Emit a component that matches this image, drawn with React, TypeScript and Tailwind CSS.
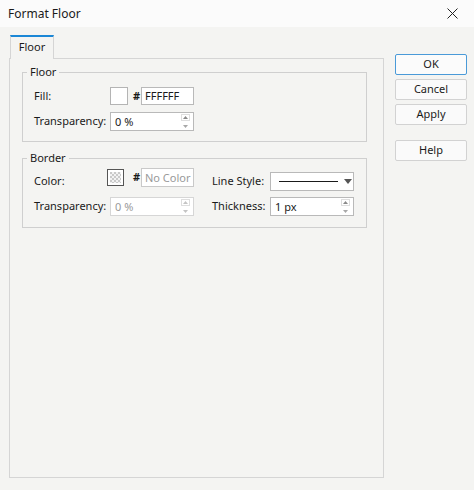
import React from "react";

const Spin = ({ value, disabled }: { value: string; disabled?: boolean }) => (
  <div className={`flex h-[19px] w-[84px] shrink-0 border ${disabled ? "border-[#d6d6d6]" : "border-[#b9b9b9]"} bg-white`}>
    <div className={`flex-1 whitespace-nowrap pl-[4px] leading-[17px] ${disabled ? "text-[#9a9a9a]" : "text-[#1a1a1a]"}`}>{value}</div>
    <div className="flex w-[13px] flex-col items-center justify-center gap-[2px] pr-[2px]">
      <div className="flex h-[7px] w-[9px] items-center justify-center border border-[#dedede]">
        <svg width="5" height="3" viewBox="0 0 5 3"><path d="M0 3 L2.5 0 L5 3Z" fill={disabled ? "#c4c4c4" : "#8a8a8a"} /></svg>
      </div>
      <div className="flex h-[6px] w-[9px] items-center justify-center">
        <svg width="5" height="3" viewBox="0 0 5 3"><path d="M0 0 L2.5 3 L5 0Z" fill={disabled ? "#c4c4c4" : "#a8a8a8"} /></svg>
      </div>
    </div>
  </div>
);

const Btn = ({ label, primary, className = "" }: { label: string; primary?: boolean; className?: string }) => (
  <div
    className={`flex h-[21px] w-[72px] items-center justify-center rounded-[2px] border text-[#1a1a1a] ${
      primary ? "border-[#4a9ad8] bg-[#fbfbfb]" : "border-[#d2d2d2] bg-[#fafafa]"
    } ${className}`}
  >
    {label}
  </div>
);

export default function App() {
  return (
    <div
      className="relative h-[490px] w-[474px] overflow-hidden whitespace-nowrap bg-[#f4f4f2] text-[11px] text-[#1a1a1a]"
      style={{ fontFamily: '"Noto Sans", "Liberation Sans", sans-serif' }}
    >
      {/* title bar */}
      <div className="flex h-[27px] items-center justify-between bg-[#fbfbfb] pl-[8px] pr-[16px]">
        <span className="text-[12px]">Format Floor</span>
        <svg width="11" height="11" viewBox="0 0 11 11">
          <path d="M0.5 0.5 L10.5 10.5 M10.5 0.5 L0.5 10.5" stroke="#222" strokeWidth="1" />
        </svg>
      </div>

      <div className="flex pl-[9px] pt-[8px]">
        {/* tabs */}
        <div className="flex w-[375px] flex-col">
          <div className="relative z-10 mb-[-1px] ml-[1px] flex h-[24px] w-[44px] items-center justify-center border-x border-t-2 border-x-[#d5d5d5] border-t-[#1b87d6] bg-[#f4f4f2] pb-[1px]">
            Floor
          </div>
          <div className="h-[420px] border border-[#d5d5d5] bg-[#f4f4f2] pl-[12px] pr-[16px] pt-[5px]">
            {/* Floor group */}
            <fieldset className="border border-[#cfcfcf] pb-[10px] pl-[11px]">
              <legend className="-ml-[7px] px-[3px] leading-[16px]">Floor</legend>
              <div className="mt-[7px] flex h-[18px] items-center">
                <div className="w-[76px] shrink-0">Fill:</div>
                <div className="h-[18px] w-[18px] shrink-0 border border-[#b4b4b4] bg-white" />
                <div className="ml-[5px] w-[8px] shrink-0 text-[11px] font-bold">#</div>
                <div className="h-[18px] w-[53px] shrink-0 border border-[#b9b9b9] bg-white pl-[3px] leading-[16px]">FFFFFF</div>
              </div>
              <div className="mt-[7px] flex h-[19px] items-center">
                <div className="w-[76px] shrink-0">Transparency:</div>
                <Spin value="0 %" />
              </div>
            </fieldset>

            {/* Border group */}
            <fieldset className="mt-[8px] border border-[#cfcfcf] pb-[11px] pl-[11px]">
              <legend className="-ml-[7px] px-[3px] leading-[16px]">Border</legend>
              <div className="mt-[6px] flex h-[19px] items-center">
                <div className="w-[73px] shrink-0">Color:</div>
                <div className="-mt-[8px] flex shrink-0 items-center">
                  <div className="h-[17px] w-[17px] border border-[#555] bg-white p-[2px]">
                    <svg width="11" height="11" viewBox="0 0 11 11">
                      <defs>
                        <pattern id="ck" width="4" height="4" patternUnits="userSpaceOnUse">
                          <rect width="4" height="4" fill="#f2f2f2" />
                          <rect width="2" height="2" fill="#c9c9c9" />
                          <rect x="2" y="2" width="2" height="2" fill="#c9c9c9" />
                        </pattern>
                      </defs>
                      <rect width="11" height="11" fill="url(#ck)" />
                    </svg>
                  </div>
                  <div className="ml-[9px] w-[8px] text-[11px] font-bold">#</div>
                  <div className="h-[19px] w-[53px] border border-[#c9c9c9] bg-white pl-[3px] leading-[17px] text-[#9a9a9a]">No Color</div>
                </div>
                <div className="ml-[18px] w-[58px] shrink-0">Line Style:</div>
                <div className="flex h-[19px] w-[84px] shrink-0 items-center border border-[#b9b9b9] bg-white">
                  <div className="ml-[8px] h-[1px] w-[60px] bg-[#1a1a1a]" />
                  <div className="ml-[5px] flex h-[15px] w-[10px] items-center justify-center">
                    <svg width="8" height="5" viewBox="0 0 8 5"><path d="M0 0 L8 0 L4 5Z" fill="#555" /></svg>
                  </div>
                </div>
              </div>
              <div className="mt-[6px] flex h-[19px] items-center">
                <div className="w-[76px] shrink-0">Transparency:</div>
                <Spin value="0 %" disabled />
                <div className="ml-[18px] w-[58px] shrink-0">Thickness:</div>
                <Spin value="1 px" />
              </div>
            </fieldset>
          </div>
        </div>

        {/* buttons */}
        <div className="ml-[11px] flex flex-col pt-[19px]">
          <Btn label="OK" primary />
          <Btn label="Cancel" className="mt-[4px]" />
          <Btn label="Apply" className="mt-[4px]" />
          <Btn label="Help" className="mt-[15px]" />
        </div>
      </div>
    </div>
  );
}
